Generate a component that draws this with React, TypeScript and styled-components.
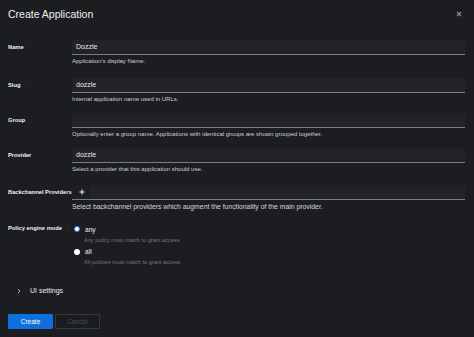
import React from "react";
import styled, { createGlobalStyle } from "styled-components";

const GlobalStyle = createGlobalStyle`
  html, body {
    margin: 0;
    padding: 0;
    background: #1b1d21;
  }
  body {
    font-family: "Liberation Sans", Arial, sans-serif;
    color: #e4e4e4;
  }
`;

const Modal = styled.div`
  width: 474px;
  height: 337px;
  overflow: hidden;
  background: #1b1d21;
  display: flex;
  flex-direction: column;
`;

const Header = styled.header`
  display: flex;
  align-items: center;
  justify-content: space-between;
  padding: 6px 12px 0 8px;
  height: 16px;
`;

const Title = styled.h1`
  margin: 0;
  font-size: 10.5px;
  line-height: 16px;
  font-weight: 400;
  color: #f0f0f0;
`;

const Close = styled.button`
  border: 0;
  background: none;
  padding: 0;
  width: 6px;
  height: 6px;
  display: flex;
  color: #8a8d90;
  cursor: pointer;
`;

const Form = styled.form`
  display: flex;
  flex-direction: column;
  padding: 18px 9px 0 8px;
`;

const Field = styled.div<{ $mb?: number }>`
  display: grid;
  grid-template-columns: 64px 1fr;
  margin-bottom: ${(p) => p.$mb ?? 10}px;
`;

const Label = styled.label<{ $lh?: number }>`
  font-size: 5.75px;
  font-weight: 700;
  line-height: ${(p) => p.$lh ?? 15}px;
  color: #f2f2f2;
  white-space: nowrap;
`;

const Req = styled.span`
  color: #7d1a14;
  margin-left: 4px;
  font-weight: 400;
`;

const Control = styled.div`
  display: flex;
  flex-direction: column;
`;

const Input = styled.div`
  box-sizing: border-box;
  height: 15px;
  background: #212327;
  border-bottom: 1px solid #7a7d81;
  padding-left: 4px;
  font-size: 7px;
  line-height: 14px;
  color: #e8e8e8;
  display: flex;
  align-items: center;
`;

const Helper = styled.div<{ $big?: boolean }>`
  margin-top: 3px;
  font-size: ${(p) => (p.$big ? 6.85 : 6)}px;
  line-height: ${(p) => (p.$big ? 8 : 7)}px;
  color: ${(p) => (p.$big ? "#d8d8d8" : "#cfcfcf")};
  white-space: nowrap;
`;

const AddButton = styled.button`
  width: 20px;
  height: 14px;
  border: 0;
  border-right: 1px solid #2a2c30;
  background: #1d1f23;
  color: #f5f5f5;
  padding: 0;
  display: flex;
  align-items: center;
  justify-content: center;
  margin-left: -4px;
`;

const RadioList = styled.div`
  display: flex;
  flex-direction: column;
  padding-top: 0.5px;
`;

const RadioRow = styled.div<{ $mt?: number }>`
  display: flex;
  align-items: center;
  gap: 5px;
  height: 9px;
  margin-top: ${(p) => p.$mt ?? 0}px;
  padding-left: 2px;
  font-size: 6.6px;
  color: #f0f0f0;
`;

const Radio = styled.span<{ $checked?: boolean }>`
  box-sizing: border-box;
  width: 6px;
  height: 6px;
  border-radius: 50%;
  background: #fff;
  border: ${(p) => (p.$checked ? "1.6px solid #2b8cf0" : "0")};
`;

const RadioHint = styled.div`
  margin-top: 2px;
  padding-left: 12px;
  font-size: 5.6px;
  line-height: 8px;
  color: #74777b;
  white-space: nowrap;
`;

const Expander = styled.div`
  display: flex;
  align-items: center;
  gap: 9px;
  height: 9px;
  margin-top: 20px;
  padding-left: 9px;
  font-size: 7px;
  color: #ececec;
`;

const Actions = styled.div`
  display: flex;
  gap: 2px;
  margin-top: 19px;
`;

const Button = styled.button<{ $primary?: boolean }>`
  box-sizing: border-box;
  width: 45px;
  height: 15px;
  padding: 0;
  font-family: inherit;
  font-size: 6.5px;
  border-radius: 1px;
  border: 1px solid ${(p) => (p.$primary ? "#0f6fdc" : "#34373c")};
  background: ${(p) => (p.$primary ? "#0f6fdc" : "#1a1c20")};
  color: ${(p) => (p.$primary ? "#ffffff" : "#3d5066")};
`;

export default function App() {
  return (
    <>
      <GlobalStyle />
      <Modal>
        <Header>
          <Title>Create Application</Title>
          <Close aria-label="Close">
            <svg width="6" height="6" viewBox="0 0 6 6">
              <path d="M1 1L5 5M5 1L1 5" stroke="currentColor" strokeWidth="1.2" />
            </svg>
          </Close>
        </Header>
        <Form>
          <Field $mb={13}>
            <Label>
              Name<Req>*</Req>
            </Label>
            <Control>
              <Input>Dozzle</Input>
              <Helper>Application's display Name.</Helper>
            </Control>
          </Field>
          <Field>
            <Label>
              Slug<Req>*</Req>
            </Label>
            <Control>
              <Input>dozzle</Input>
              <Helper>Internal application name used in URLs.</Helper>
            </Control>
          </Field>
          <Field>
            <Label>Group</Label>
            <Control>
              <Input />
              <Helper>
                Optionally enter a group name. Applications with identical groups are shown grouped together.
              </Helper>
            </Control>
          </Field>
          <Field $mb={12}>
            <Label>Provider</Label>
            <Control>
              <Input>dozzle</Input>
              <Helper>Select a provider that this application should use.</Helper>
            </Control>
          </Field>
          <Field $mb={13}>
            <Label>Backchannel Providers</Label>
            <Control>
              <Input>
                <AddButton type="button" aria-label="Add">
                  <svg width="6" height="6" viewBox="0 0 6 6">
                    <path d="M3 0.5V5.5M0.5 3H5.5" stroke="currentColor" strokeWidth="1.1" />
                  </svg>
                </AddButton>
              </Input>
              <Helper $big>
                Select backchannel providers which augment the functionality of the main provider.
              </Helper>
            </Control>
          </Field>
          <Field $mb={0}>
            <Label $lh={9}>
              Policy engine mode<Req>*</Req>
            </Label>
            <RadioList>
              <RadioRow>
                <Radio $checked />
                any
              </RadioRow>
              <RadioHint>Any policy must match to grant access</RadioHint>
              <RadioRow $mt={3.5}>
                <Radio />
                all
              </RadioRow>
              <RadioHint>All policies must match to grant access</RadioHint>
            </RadioList>
          </Field>
          <Expander>
            <svg width="4" height="6" viewBox="0 0 4 6">
              <path d="M1 1L3 3L1 5" stroke="#b8bbbe" strokeWidth="0.9" fill="none" />
            </svg>
            UI settings
          </Expander>
          <Actions>
            <Button type="button" $primary>
              Create
            </Button>
            <Button type="button">Cancel</Button>
          </Actions>
        </Form>
      </Modal>
    </>
  );
}
